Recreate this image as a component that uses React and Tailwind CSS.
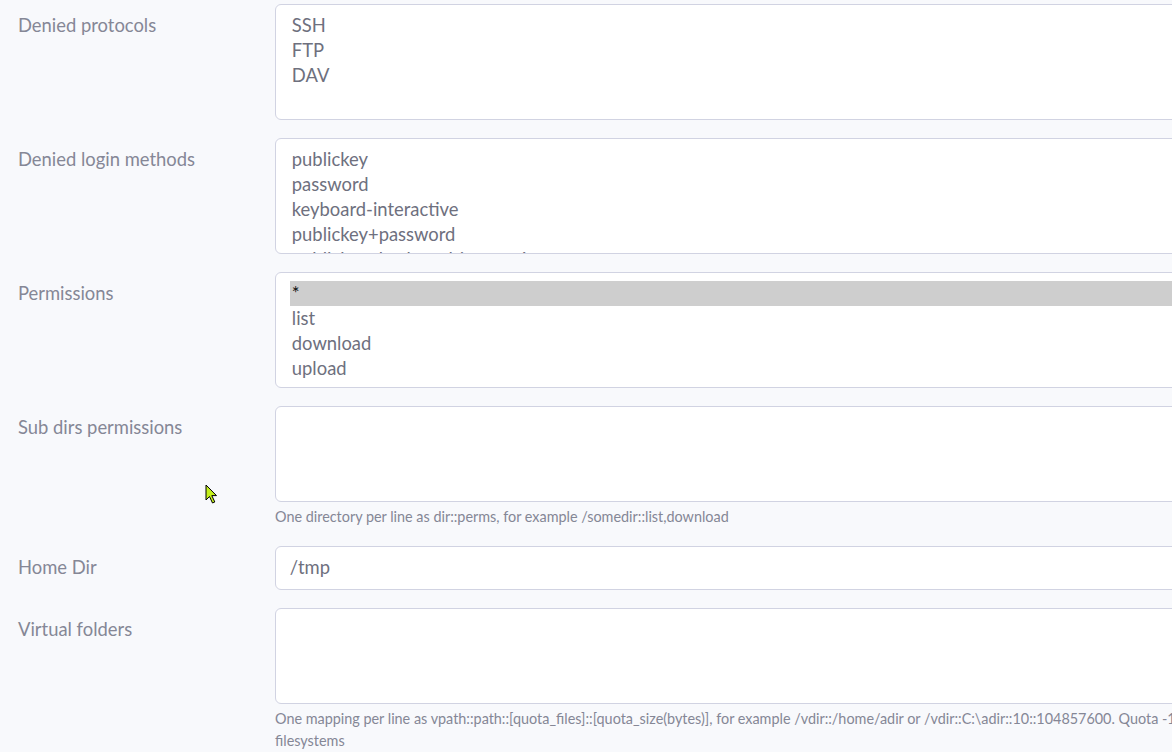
import React from "react";

const font = { fontFamily: "Lato, 'Open Sans', sans-serif" };

function Label({ children }) {
  return (
    <div className="w-[275px] shrink-0 pl-[18px] pt-[8px] text-[18.4px] leading-[27.6px] text-[#858796]">
      {children}
    </div>
  );
}

function Select({ items, selected }) {
  return (
    <div className="h-[116px] overflow-hidden rounded-[6px] border border-[#d1d3e2] bg-white pb-[6.9px] pl-[13.8px] pt-[7.5px]">
      {items.map((it, i) => (
        <div
          key={it}
          className={
            "h-[25px] whitespace-nowrap px-[2px] text-[18.4px] leading-[25px] " +
            (selected === i ? "bg-[#cecece] text-[#111111]" : "text-[#6e707e]")
          }
        >
          {it}
        </div>
      ))}
    </div>
  );
}

function Textarea() {
  return <div className="h-[96px] rounded-[6px] border border-[#d1d3e2] bg-white" />;
}

function Help({ lines }) {
  return (
    <div className="mt-[4px] text-[14.4px] leading-[22px] text-[#858796]">
      {lines.map((l) => (
        <div key={l} className="whitespace-nowrap">
          {l}
        </div>
      ))}
    </div>
  );
}

function Row({ label, children }) {
  return (
    <div className="mb-[18px] flex">
      <Label>{label}</Label>
      <div className="w-[1200px] shrink-0">{children}</div>
    </div>
  );
}

export default function App() {
  return (
    <div className="relative h-[752px] w-[1172px] overflow-hidden bg-[#f8f9fc]" style={font}>
      <div className="pt-[4px]">
        <Row label="Denied protocols">
          <Select items={["SSH", "FTP", "DAV"]} />
        </Row>
        <Row label="Denied login methods">
          <Select
            items={[
              "publickey",
              "password",
              "keyboard-interactive",
              "publickey+password",
              "publickey+keyboard-interactive",
            ]}
          />
        </Row>
        <Row label="Permissions">
          <Select items={["*", "list", "download", "upload"]} selected={0} />
        </Row>
        <Row label="Sub dirs permissions">
          <Textarea />
          <Help lines={["One directory per line as dir::perms, for example /somedir::list,download"]} />
        </Row>
        <Row label="Home Dir">
          <div className="flex h-[43.7px] items-center rounded-[6px] border border-[#d1d3e2] bg-white px-[13.8px] text-[18.4px] text-[#6e707e]">
            /tmp
          </div>
        </Row>
        <Row label="Virtual folders">
          <Textarea />
          <Help
            lines={[
              "One mapping per line as vpath::path::[quota_files]::[quota_size(bytes)], for example /vdir::/home/adir or /vdir::C:\\adir::10::104857600. Quota -1 means no quota limit, 0 means included inside user quota. Ignored for non local",
              "filesystems",
            ]}
          />
        </Row>
      </div>
      <svg
        className="absolute left-[205px] top-[484px]"
        width="14"
        height="21"
        viewBox="0 0 14 21"
      >
        <path
          d="M1 1 L1 16 L4.5 12.5 L7.5 19 L9.8 18 L6.8 11.6 L11.5 11.6 Z"
          fill="#c4f01c"
          stroke="#000"
          strokeWidth="1"
          strokeLinejoin="miter"
        />
      </svg>
    </div>
  );
}
